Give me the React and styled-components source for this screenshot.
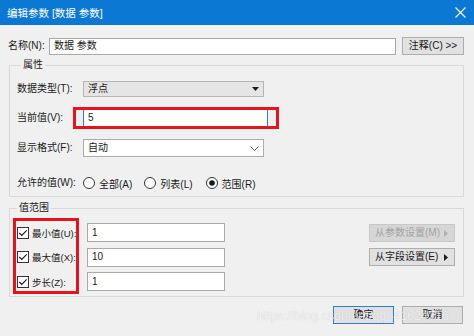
import React from 'react';
import styled, { createGlobalStyle } from 'styled-components';

const Global = createGlobalStyle`
  html, body { margin: 0; padding: 0; background: #f0f0f0; }
  body {
    font-family: "Liberation Sans", "Noto Sans CJK SC", sans-serif;
    font-size: 10px;
    color: #1a1a1a;
  }
  svg { flex-shrink: 0; display: block; }
`;

const Dialog = styled.div`
  position: relative;
  width: 474px;
  height: 336px;
  background: #f0f0f0;
  display: flex;
  flex-direction: column;
  overflow: hidden;
`;

const TitleBar = styled.div`
  height: 25px;
  background: #0b78d4;
  color: #fff;
  display: flex;
  align-items: center;
  justify-content: space-between;
  padding: 0 8px 0 7px;
  font-size: 10.5px;
`;

const Body = styled.div`
  padding: 12px 10px 0 8px;
  display: flex;
  flex-direction: column;
`;

const Row = styled.div`
  display: flex;
  align-items: center;
  height: ${(p) => p.$h || 18}px;
  margin-top: ${(p) => p.$mt || 0}px;
`;

const Label = styled.div`
  width: ${(p) => p.$w}px;
  flex-shrink: 0;
  white-space: nowrap;
  line-height: 14px;
`;

const TextInput = styled.div`
  box-sizing: border-box;
  height: ${(p) => p.$h || 18}px;
  width: ${(p) => (p.$w ? `${p.$w}px` : 'auto')};
  flex: ${(p) => (p.$w ? 'none' : 1)};
  background: #fff;
  border: 1px solid #a9a9a9;
  padding: 0 4px;
  display: flex;
  align-items: center;
  line-height: 14px;
`;

const FocusInput = styled(TextInput)`
  border: none;
  border-left: 1px solid #2b7fd0;
  border-right: 1px solid #2b7fd0;
`;

const Button = styled.div`
  box-sizing: border-box;
  width: ${(p) => p.$w}px;
  height: 18px;
  background: ${(p) => (p.$disabled ? '#d6d6d6' : '#e1e1e1')};
  color: ${(p) => (p.$disabled ? '#a3a3a3' : '#1a1a1a')};
  border: 1px solid ${(p) => (p.$primary ? '#2b7fd0' : p.$disabled ? '#c8c8c8' : '#adadad')};
  display: flex;
  align-items: center;
  justify-content: ${(p) => (p.$arrow ? 'space-between' : 'center')};
  padding: ${(p) => (p.$arrow ? '0 6px 0 5px' : '0')};
  line-height: 14px;
  white-space: nowrap;
  flex-shrink: 0;
`;

const Group = styled.fieldset`
  margin: ${(p) => p.$mt}px 0 0 1px;
  padding: ${(p) => p.$pad};
  border: 1px solid #d9d9d9;
  min-width: 0;
`;

const Legend = styled.legend`
  padding: 0 2px;
  margin-left: 4px;
  line-height: 14px;
  height: 14px;
`;

const Combo = styled.div`
  box-sizing: border-box;
  width: 181px;
  height: ${(p) => p.$h}px;
  background: ${(p) => (p.$gray ? '#e5e5e5' : '#fff')};
  border: 1px solid ${(p) => (p.$gray ? '#b5b5b5' : '#acacac')};
  display: flex;
  align-items: center;
  justify-content: space-between;
  padding: 0 4px 0 4px;
  line-height: 14px;
`;

const Highlight = styled.div`
  box-sizing: border-box;
  border: 3px solid #e3141c;
  padding: ${(p) => p.$pad};
  display: flex;
  flex-direction: ${(p) => p.$dir || 'row'};
  gap: ${(p) => p.$gap || 0}px;
  width: ${(p) => p.$w}px;
  height: ${(p) => p.$h}px;
  flex-shrink: 0;
`;

const Radios = styled.div`
  display: flex;
  align-items: center;
`;

const RadioItem = styled.div`
  display: flex;
  align-items: center;
  gap: 4px;
  margin-right: ${(p) => p.$mr || 0}px;
  white-space: nowrap;
`;

const CheckRow = styled.div`
  display: flex;
  align-items: center;
  gap: 3px;
  height: 19px;
  font-size: 9.5px;
  white-space: nowrap;
`;

const Column = styled.div`
  display: flex;
  flex-direction: column;
  gap: ${(p) => p.$gap}px;
  padding-top: ${(p) => p.$pt}px;
  margin-left: ${(p) => p.$ml};
  margin-right: ${(p) => p.$mr || 0}px;
`;

const RangeBody = styled.div`
  display: flex;
  align-items: flex-start;
`;

const Footer = styled.div`
  display: flex;
  justify-content: flex-end;
  gap: 8px;
  margin-top: 9px;
  padding-right: 1px;
`;

const Watermark = styled.div`
  position: absolute;
  left: 257px;
  top: 309px;
  font-family: "Liberation Sans", Arial, sans-serif;
  font-size: 12.5px;
  color: rgba(255, 255, 255, 0.72);
  text-shadow: 0 0 1px rgba(0, 0, 0, 0.18);
  pointer-events: none;
  white-space: nowrap;
`;

const Close = () => (
  <svg width="11" height="11" viewBox="0 0 11 11">
    <path d="M0.5 0.5 L10.5 10.5 M10.5 0.5 L0.5 10.5" stroke="#fff" strokeWidth="1.1" />
  </svg>
);

const DownTri = () => (
  <svg width="7" height="4" viewBox="0 0 7 4">
    <path d="M0 0 H7 L3.5 4 Z" fill="#1a1a1a" />
  </svg>
);

const Chevron = () => (
  <svg width="9" height="5" viewBox="0 0 9 5">
    <path d="M0.5 0.5 L4.5 4.5 L8.5 0.5" stroke="#555" fill="none" strokeWidth="1" />
  </svg>
);

const RightTri = ({ color }) => (
  <svg width="4" height="7" viewBox="0 0 4 7">
    <path d="M0 0 L4 3.5 L0 7 Z" fill={color} />
  </svg>
);

const Radio = ({ on }) => (
  <svg width="12" height="12" viewBox="0 0 12 12">
    <circle cx="6" cy="6" r="5.5" fill="#fff" stroke="#333" strokeWidth="1" />
    {on && <circle cx="6" cy="6" r="2.8" fill="#1a1a1a" />}
  </svg>
);

const Check = () => (
  <svg width="12" height="12" viewBox="0 0 12 12">
    <rect x="0.5" y="0.5" width="11" height="11" fill="#fff" stroke="#333" />
    <path d="M2.3 6 L4.8 8.5 L9.7 3.4" stroke="#1a1a1a" fill="none" strokeWidth="1.1" />
  </svg>
);

export default function App() {
  return (
    <>
      <Global />
      <Dialog>
        <TitleBar>
          <span>编辑参数 [数据 参数]</span>
          <Close />
        </TitleBar>
        <Body>
          <Row>
            <Label $w={41}>名称(N):</Label>
            <TextInput $h={17}>数据 参数</TextInput>
            <div style={{ width: 6 }} />
            <Button $w={62}>注释(C) &gt;&gt;</Button>
          </Row>

          <Group $mt={3} $pad="9px 7px 6px 7px">
            <Legend>属性</Legend>
            <Row $h={16}>
              <Label $w={66}>数据类型(T):</Label>
              <Combo $h={16} $gray>
                <span>浮点</span>
                <DownTri />
              </Combo>
            </Row>
            <Row $h={22} $mt={10}>
              <Label $w={56}>当前值(V):</Label>
              <Highlight $w={206} $h={22} $pad="0 8px 0 7px">
                <FocusInput $h={16}>5</FocusInput>
              </Highlight>
            </Row>
            <Row $mt={10}>
              <Label $w={66}>显示格式(F):</Label>
              <Combo $h={18}>
                <span>自动</span>
                <Chevron />
              </Combo>
            </Row>
            <Row $h={14} $mt={19}>
              <Label $w={66}>允许的值(W):</Label>
              <Radios>
                <RadioItem $mr={12}>
                  <Radio />
                  <span>全部(A)</span>
                </RadioItem>
                <RadioItem $mr={13}>
                  <Radio />
                  <span>列表(L)</span>
                </RadioItem>
                <RadioItem>
                  <Radio on />
                  <span>范围(R)</span>
                </RadioItem>
              </Radios>
            </Row>
          </Group>

          <Group $mt={4} $pad="3px 0 2px 3px">
            <Legend>值范围</Legend>
            <RangeBody>
              <Highlight $w={66} $h={76} $dir="column" $gap={5.5} $pad="2px 0 0 1px">
                <CheckRow>
                  <Check />
                  <span>最小值(U):</span>
                </CheckRow>
                <CheckRow>
                  <Check />
                  <span>最大值(X):</span>
                </CheckRow>
                <CheckRow>
                  <Check />
                  <span>步长(Z):</span>
                </CheckRow>
              </Highlight>
              <Column $gap={5.5} $pt={5} $ml="8px">
                <TextInput $w={138} $h={19}>1</TextInput>
                <TextInput $w={138} $h={19}>10</TextInput>
                <TextInput $w={138} $h={19}>1</TextInput>
              </Column>
              <Column $gap={6} $pt={6} $ml="auto" $mr={8}>
                <Button $w={86} $disabled $arrow>
                  <span>从参数设置(M)</span>
                  <RightTri color="#b0b0b0" />
                </Button>
                <Button $w={86} $arrow>
                  <span>从字段设置(E)</span>
                  <RightTri color="#1a1a1a" />
                </Button>
              </Column>
            </RangeBody>
          </Group>

          <Footer>
            <Button $w={61} $primary>确定</Button>
            <Button $w={61}>取消</Button>
          </Footer>
        </Body>
        <Watermark>https://blog.csdn.net/qq_41624716</Watermark>
      </Dialog>
    </>
  );
}
